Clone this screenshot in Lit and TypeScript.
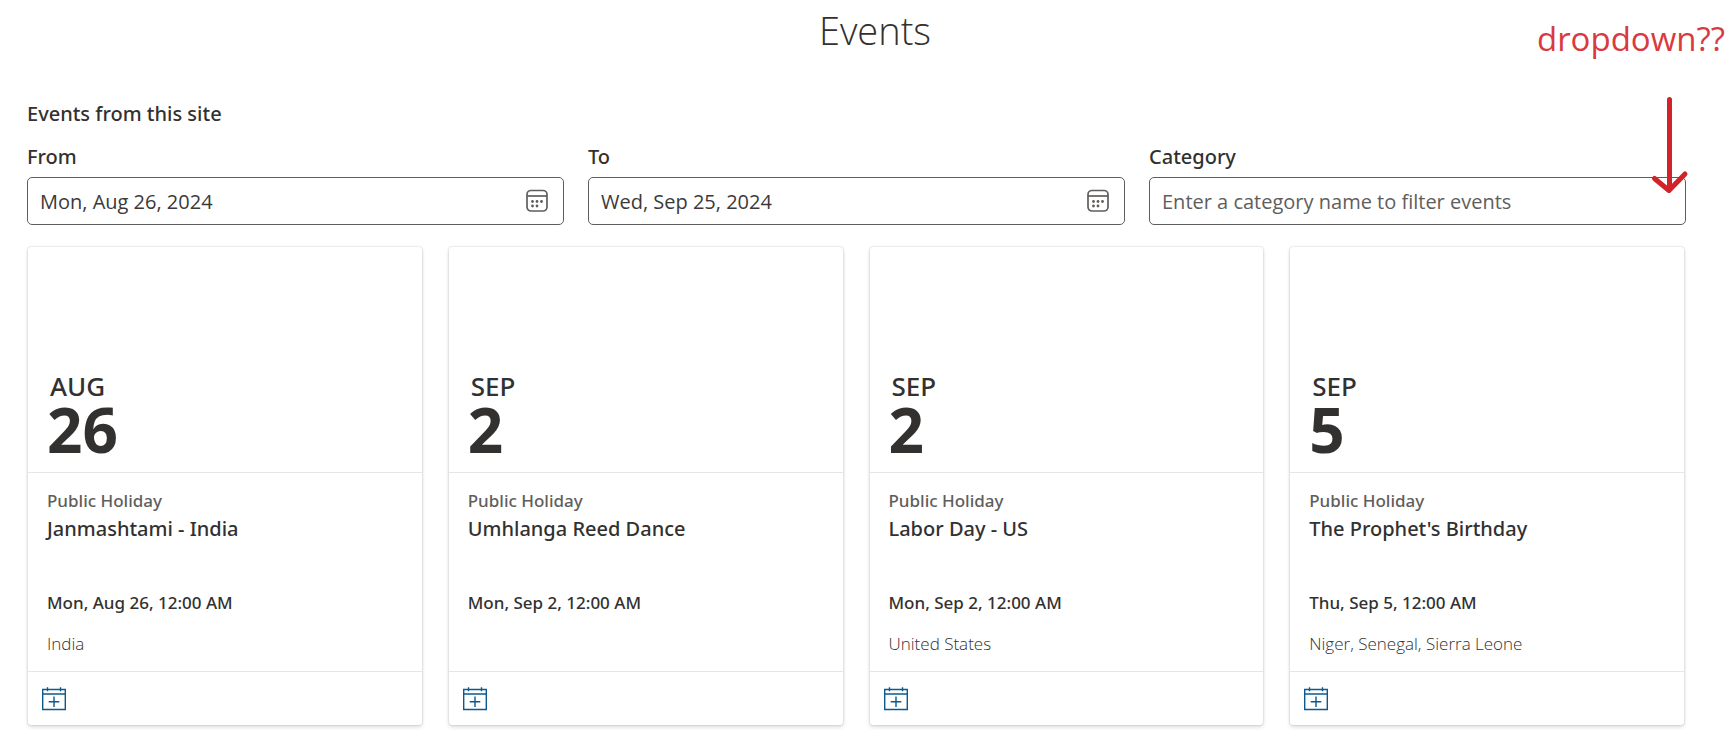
import { LitElement, html, css, svg } from "lit";
import { customElement, property } from "lit/decorators.js";

interface EventItem {
  month: string;
  day: string;
  category: string;
  title: string;
  time: string;
  place: string;
}

const EVENTS: EventItem[] = [
  { month: "AUG", day: "26", category: "Public Holiday", title: "Janmashtami - India", time: "Mon, Aug 26, 12:00 AM", place: "India" },
  { month: "SEP", day: "2", category: "Public Holiday", title: "Umhlanga Reed Dance", time: "Mon, Sep 2, 12:00 AM", place: "" },
  { month: "SEP", day: "2", category: "Public Holiday", title: "Labor Day - US", time: "Mon, Sep 2, 12:00 AM", place: "United States" },
  { month: "SEP", day: "5", category: "Public Holiday", title: "The Prophet's Birthday", time: "Thu, Sep 5, 12:00 AM", place: "Niger, Senegal, Sierra Leone" },
];

const dots = [
  [7.5, 12.5], [12, 12.5], [16.5, 12.5], [7.5, 17], [12, 17],
].map(([x, y]) => svg`<circle cx=${x} cy=${y} r="1.4" fill="currentColor" stroke="none" />`);

@customElement("event-card")
export class EventCard extends LitElement {
  @property({ attribute: false }) event!: EventItem;

  static styles = css`
    :host {
      display: flex;
      flex-direction: column;
      background: #fff;
      border-radius: 3px;
      box-shadow: 0 0 2px rgba(0, 0, 0, 0.22), 0 2px 4px rgba(0, 0, 0, 0.14);
      color: #323130;
    }
    .date {
      display: flex;
      flex-direction: column;
      justify-content: flex-end;
      height: 226px;
      padding: 0 19px 14px;
      box-sizing: border-box;
      border-bottom: 1px solid #e6e6e6;
    }
    .month {
      padding-left: 3px;
      font-family: "Noto Sans", sans-serif;
      font-size: 26px;
      line-height: 28px;
      font-weight: 500;
    }
    .day {
      font-size: 62px;
      line-height: 58px;
      font-weight: 700;
    }
    .details {
      display: flex;
      flex-direction: column;
      min-height: 198px;
      padding: 14px 19px 12px;
      box-sizing: border-box;
    }
    .category {
      font-family: "Noto Sans", sans-serif;
      font-size: 17px;
      line-height: 28px;
      font-weight: 500;
      color: #605e5c;
    }
    .title {
      margin: 0 0 48px;
      font-family: "Noto Sans", sans-serif;
      font-size: 20px;
      line-height: 28px;
      font-weight: 500;
    }
    .time {
      font-family: "Noto Sans", sans-serif;
      font-size: 17px;
      line-height: 24px;
      font-weight: 500;
    }
    .place {
      margin-top: 17px;
      font-size: 17px;
      line-height: 24px;
      font-weight: 300;
      color: #323130;
    }
    .actions {
      display: flex;
      height: 54px;
      align-items: center;
      padding: 0 10px;
      box-sizing: border-box;
      border-top: 1px solid #e6e6e6;
    }
    .add {
      display: flex;
      padding: 4px;
      border: 0;
      background: none;
      color: #0b5a8e;
      cursor: pointer;
    }
  `;

  render() {
    const e = this.event;
    return html`
      <div class="date">
        <span class="month">${e.month}</span>
        <span class="day">${e.day}</span>
      </div>
      <div class="details">
        <span class="category">${e.category}</span>
        <h3 class="title">${e.title}</h3>
        <span class="time">${e.time}</span>
        <span class="place">${e.place}</span>
      </div>
      <div class="actions">
        <button class="add" type="button" aria-label="Add to my calendar">
          <svg width="24" height="24" viewBox="0 0 24 24" fill="none" stroke="currentColor" stroke-width="1.4">
            <path d="M.7 2.5h22.6v20H.7zM.7 7h22.6M5.5.2v4M18.5.2v4M12 9.5V20M6.7 14.7h10.6" />
          </svg>
        </button>
      </div>
    `;
  }
}

@customElement("app-root")
export class AppRoot extends LitElement {
  static styles = css`
    :host {
      display: block;
      position: relative;
      background: #fff;
      color: #323130;
      font-family: "Open Sans", "Noto Sans", sans-serif;
    }
    .heading {
      margin: 0;
      padding: 3px 0 1px 18px;
      font-size: 38px;
      line-height: 54px;
      font-weight: 300;
      text-align: center;
    }
    .content {
      padding: 42px 46px 15px 27px;
    }
    .subheading {
      margin: 0 0 15px;
      font-family: "Noto Sans", sans-serif;
      font-size: 20px;
      line-height: 28px;
      font-weight: 500;
    }
    .filters {
      display: grid;
      grid-template-columns: repeat(3, minmax(0, 1fr));
      gap: 24px;
    }
    .label {
      display: block;
      margin-bottom: 6px;
      font-family: "Noto Sans", sans-serif;
      font-size: 20px;
      line-height: 28px;
      font-weight: 500;
    }
    .box {
      display: flex;
      align-items: center;
      height: 48px;
      box-sizing: border-box;
      border: 1px solid #605e5c;
      border-radius: 5px;
      padding: 0 12px;
    }
    .input {
      flex: 1;
      min-width: 0;
      padding: 2px 0 0;
      border: 0;
      outline: 0;
      background: none;
      color: #3b3a39;
      font: 400 20px/28px "Open Sans", "Noto Sans", sans-serif;
    }
    .input::placeholder {
      color: #605e5c;
      opacity: 1;
    }
    .picker {
      display: flex;
      padding: 2px;
      border: 0;
      background: none;
      color: #605e5c;
      cursor: pointer;
    }
    .cards {
      display: grid;
      grid-template-columns: repeat(4, minmax(0, 1fr));
      gap: 27px;
      padding: 22px 2px 0 1px;
    }
    .note {
      position: absolute;
      top: 16px;
      right: 7px;
      color: #d93a40;
      font-size: 33px;
      line-height: 46px;
    }
    .arrow {
      position: absolute;
      top: 94px;
      right: 42px;
      pointer-events: none;
    }
  `;

  private dateField(id: string, label: string, value: string) {
    return html`
      <div>
        <label class="label" for=${id}>${label}</label>
        <div class="box">
          <input class="input" id=${id} type="text" .value=${value} />
          <button class="picker" type="button" aria-label="Open calendar">
            <svg width="24" height="24" viewBox="0 0 24 24" fill="none" stroke="currentColor" stroke-width="1.7">
              <rect x="2" y="1.5" width="20" height="20.5" rx="4" />
              <path d="M2 7h20" />
              ${dots}
            </svg>
          </button>
        </div>
      </div>
    `;
  }

  render() {
    return html`
      <h1 class="heading">Events</h1>
      <main class="content">
        <h2 class="subheading">Events from this site</h2>
        <div class="filters">
          ${this.dateField("from", "From", "Mon, Aug 26, 2024")}
          ${this.dateField("to", "To", "Wed, Sep 25, 2024")}
          <div>
            <label class="label" for="category">Category</label>
            <div class="box">
              <input class="input" id="category" type="text" placeholder="Enter a category name to filter events" />
            </div>
          </div>
        </div>
        <section class="cards">
          ${EVENTS.map((e) => html`<event-card .event=${e}></event-card>`)}
        </section>
      </main>
      <span class="note">dropdown??</span>
      <svg class="arrow" width="40" height="102" viewBox="0 0 40 102" fill="none" stroke="#d2232a" stroke-width="5" stroke-linecap="round" stroke-linejoin="round">
        <path d="M19.5 5.5V95M4.5 84.5L19 96.5L35 80" />
      </svg>
    `;
  }
}
